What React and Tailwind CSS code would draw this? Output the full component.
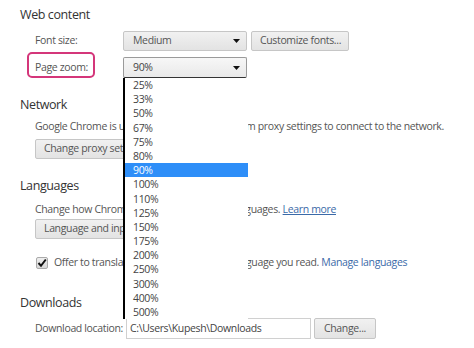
import React from 'react';

const zoomLevels = ['25%', '33%', '50%', '67%', '75%', '80%', '90%', '100%', '110%', '125%', '150%', '175%', '200%', '250%', '300%', '400%', '500%'];

const Arrow = () => (
  <svg width="7" height="4" viewBox="0 0 7 4" className="shrink-0">
    <path d="M0 0 L7 0 L3.5 4 Z" fill="#111" />
  </svg>
);

const GrayButton = ({ children, className = '' }) => (
  <div className={`h-[20px] flex items-center px-[8px] border border-[#c6c6c6] rounded-[2px] bg-gradient-to-b from-[#f1f1f1] to-[#e3e3e3] text-[#555] whitespace-nowrap ${className}`}>
    {children}
  </div>
);

const Heading = ({ children, className = '' }) => (
  <h2 className={`text-[12.5px] leading-[20px] tracking-[-0.4px] text-[#333] ${className}`}>{children}</h2>
);

const App = () => {
  return (
    <div className="relative w-[474px] h-[348px] bg-white overflow-hidden font-['Open_Sans',sans-serif] text-[10.5px] tracking-[-0.35px] text-[#555]">
      <div className="pl-[20px] pt-[5px]">
        {/* Web content */}
        <Heading>Web content</Heading>
        <div className="ml-[15px] mt-[6px] flex items-center h-[20px]">
          <div className="w-[88px]">Font size:</div>
          <div className="w-[124px] h-[20px] flex items-center justify-between pl-[9px] pr-[6px] border border-[#c6c6c6] rounded-[2px] bg-gradient-to-b from-[#f1f1f1] to-[#e3e3e3]">
            <span>Medium</span>
            <Arrow />
          </div>
          <GrayButton className="ml-[4px] w-[98px]">Customize fonts...</GrayButton>
        </div>
        <div className="ml-[15px] mt-[6px] flex items-center h-[21px]">
          <div className="w-[88px] relative">
            <span>Page zoom:</span>
            <div className="absolute left-[-8px] top-[-8px] w-[68px] h-[26px] border-[2.5px] border-[#d4367a] rounded-[5px]"></div>
          </div>
          <div className="w-[124px] h-[21px] flex items-center justify-between pl-[9px] pr-[6px] border border-[#9a9a9a] border-b-[#333] rounded-[2px] bg-gradient-to-b from-[#f7f7f7] to-[#e9e9e9] text-[#444]">
            <span>90%</span>
            <Arrow />
          </div>
        </div>

        {/* Network */}
        <Heading className="mt-[17px]">Network</Heading>
        <p className="ml-[15px] mt-[3px] leading-[16px] whitespace-nowrap">Google Chrome is using your computer's system proxy settings to connect to the network.</p>
        <GrayButton className="ml-[15px] mt-[5px] w-[120px]">Change proxy settings...</GrayButton>

        {/* Languages */}
        <Heading className="mt-[17px]">Languages</Heading>
        <p className="ml-[15px] mt-[5px] leading-[16px] whitespace-nowrap">
          Change how Chrome handles and displays languages. <span className="text-[#3b6aa8] underline">Learn more</span>
        </p>
        <GrayButton className="ml-[15px] mt-[2px] w-[150px]">Language and input settings...</GrayButton>
        <div className="ml-[16px] mt-[16px] flex items-center h-[16px]">
          <div className="w-[12px] h-[12px] border border-[#aaa] rounded-[2px] bg-gradient-to-b from-[#eee] to-[#d8d8d8] flex items-center justify-center">
            <svg width="10" height="10" viewBox="0 0 10 10">
              <path d="M1.5 5 L4 7.8 L8.8 1.5" stroke="#111" strokeWidth="2" fill="none" />
            </svg>
          </div>
          <span className="ml-[6px] whitespace-nowrap">
            Offer to translate pages that aren't in a language you read. <span className="text-[#3b6aa8]">Manage languages</span>
          </span>
        </div>

        {/* Downloads */}
        <Heading className="mt-[22px]">Downloads</Heading>
        <div className="ml-[15px] mt-[5px] flex items-center h-[21px]">
          <div className="w-[91px] whitespace-nowrap">Download location:</div>
          <div className="w-[185px] h-[21px] flex items-center pl-[3px] border border-[#d0d0d0] bg-white text-[#444] whitespace-nowrap">C:\Users\Kupesh\Downloads</div>
          <GrayButton className="ml-[3px] w-[62px] h-[21px] justify-center">Change...</GrayButton>
        </div>
      </div>

      {/* open zoom dropdown */}
      <div className="absolute left-[123px] top-[78px] w-[125px] bg-white border-l-2 border-black">
        {zoomLevels.map((z) => (
          <div
            key={z}
            className={z === '90%' ? 'h-[14.2px] leading-[14.2px] pl-[8px] bg-[#2e8ef8] text-white' : 'h-[14.2px] leading-[14.2px] pl-[8px] text-[#444]'}
          >
            {z}
          </div>
        ))}
      </div>
    </div>
  );
};

export default App;
